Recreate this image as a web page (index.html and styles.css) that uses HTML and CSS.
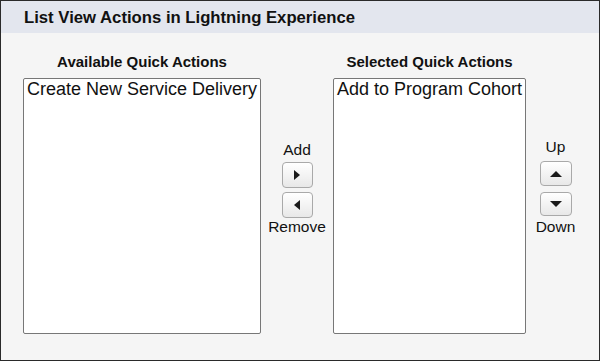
FILE: index.html
```html
<!DOCTYPE html>
<html>
<head>
<meta charset="utf-8">
<link rel="stylesheet" href="styles.css">
</head>
<body>
<div class="panel">
  <div class="header">List View Actions in Lightning Experience</div>
  <div class="content">
    <div class="col col-left">
      <div class="col-title">Available Quick Actions</div>
      <div class="listbox listbox-left">
        <div class="item">Create New Service Delivery</div>
      </div>
    </div>
    <div class="controls controls-mid">
      <div class="ctl-label label-top">Add</div>
      <div class="btn btn-first"><span class="tri tri-right"></span></div>
      <div class="btn btn-second"><span class="tri tri-left"></span></div>
      <div class="ctl-label">Remove</div>
    </div>
    <div class="col col-right">
      <div class="col-title">Selected Quick Actions</div>
      <div class="listbox listbox-right">
        <div class="item">Add to Program Cohort</div>
      </div>
    </div>
    <div class="controls controls-right">
      <div class="ctl-label label-top">Up</div>
      <div class="btn btn-first"><span class="tri tri-up"></span></div>
      <div class="btn btn-second"><span class="tri tri-down"></span></div>
      <div class="ctl-label">Down</div>
    </div>
  </div>
</div>
</body>
</html>
```
FILE: styles.css
```css
html, body {
  margin: 0;
  padding: 0;
  background: #ffffff;
}
body {
  font-family: "Liberation Sans", Arial, sans-serif;
  color: #111;
}
.panel {
  width: 598px;
  height: 359px;
  border: 1px solid #2a2a2a;
  background: #f5f5f5;
  display: flex;
  flex-direction: column;
}
.header {
  height: 32px;
  box-sizing: border-box;
  background: #e3e6ee;
  padding: 7px 0 0 23px;
  font-weight: bold;
  font-size: 16.7px;
  line-height: 20px;
  color: #111;
}
.content {
  display: flex;
  align-items: flex-start;
  padding: 20px 0 0 22px;
}
.col {
  display: flex;
  flex-direction: column;
  align-items: center;
}
.col-title {
  font-weight: bold;
  font-size: 15px;
  line-height: 17px;
  margin-bottom: 8px;
}
.listbox {
  background: #fff;
  border: 1px solid #777;
  border-radius: 2px;
  box-sizing: border-box;
  height: 256px;
}
.listbox-left { width: 238px; }
.listbox-right { width: 193px; }
.item {
  font-size: 18px;
  line-height: 20px;
  padding: 0 3px;
  white-space: nowrap;
}
.controls {
  display: flex;
  flex-direction: column;
  align-items: center;
}
.controls-mid {
  width: 72px;
  margin-top: 88px;
}
.controls-right {
  width: 59px;
  margin-top: 85px;
}
.ctl-label {
  font-size: 15.5px;
  line-height: 17px;
}
.controls-mid .label-top { margin-bottom: 4px; }
.controls-mid .btn { width: 31px; height: 26px; }
.controls-mid .btn-second { margin-top: 4px; }
.controls-right .label-top { margin-bottom: 6px; }
.controls-right .btn { width: 32px; height: 25px; }
.controls-right .btn-second { margin-top: 6px; height: 24px; margin-bottom: 2px; }
.btn {
  box-sizing: border-box;
  border: 1px solid #a9a9a9;
  border-radius: 4px;
  background: linear-gradient(#ffffff, #e8e8e8);
  display: flex;
  align-items: center;
  justify-content: center;
}
.tri {
  width: 0;
  height: 0;
  border-style: solid;
}
.tri-right {
  border-width: 5.5px 0 5.5px 6px;
  border-color: transparent transparent transparent #1a1a1a;
}
.tri-left {
  border-width: 5.5px 6px 5.5px 0;
  border-color: transparent #1a1a1a transparent transparent;
}
.tri-up {
  border-width: 0 6.5px 6px 6.5px;
  border-color: transparent transparent #1a1a1a transparent;
}
.tri-down {
  border-width: 6px 6.5px 0 6.5px;
  border-color: #1a1a1a transparent transparent transparent;
}
```
